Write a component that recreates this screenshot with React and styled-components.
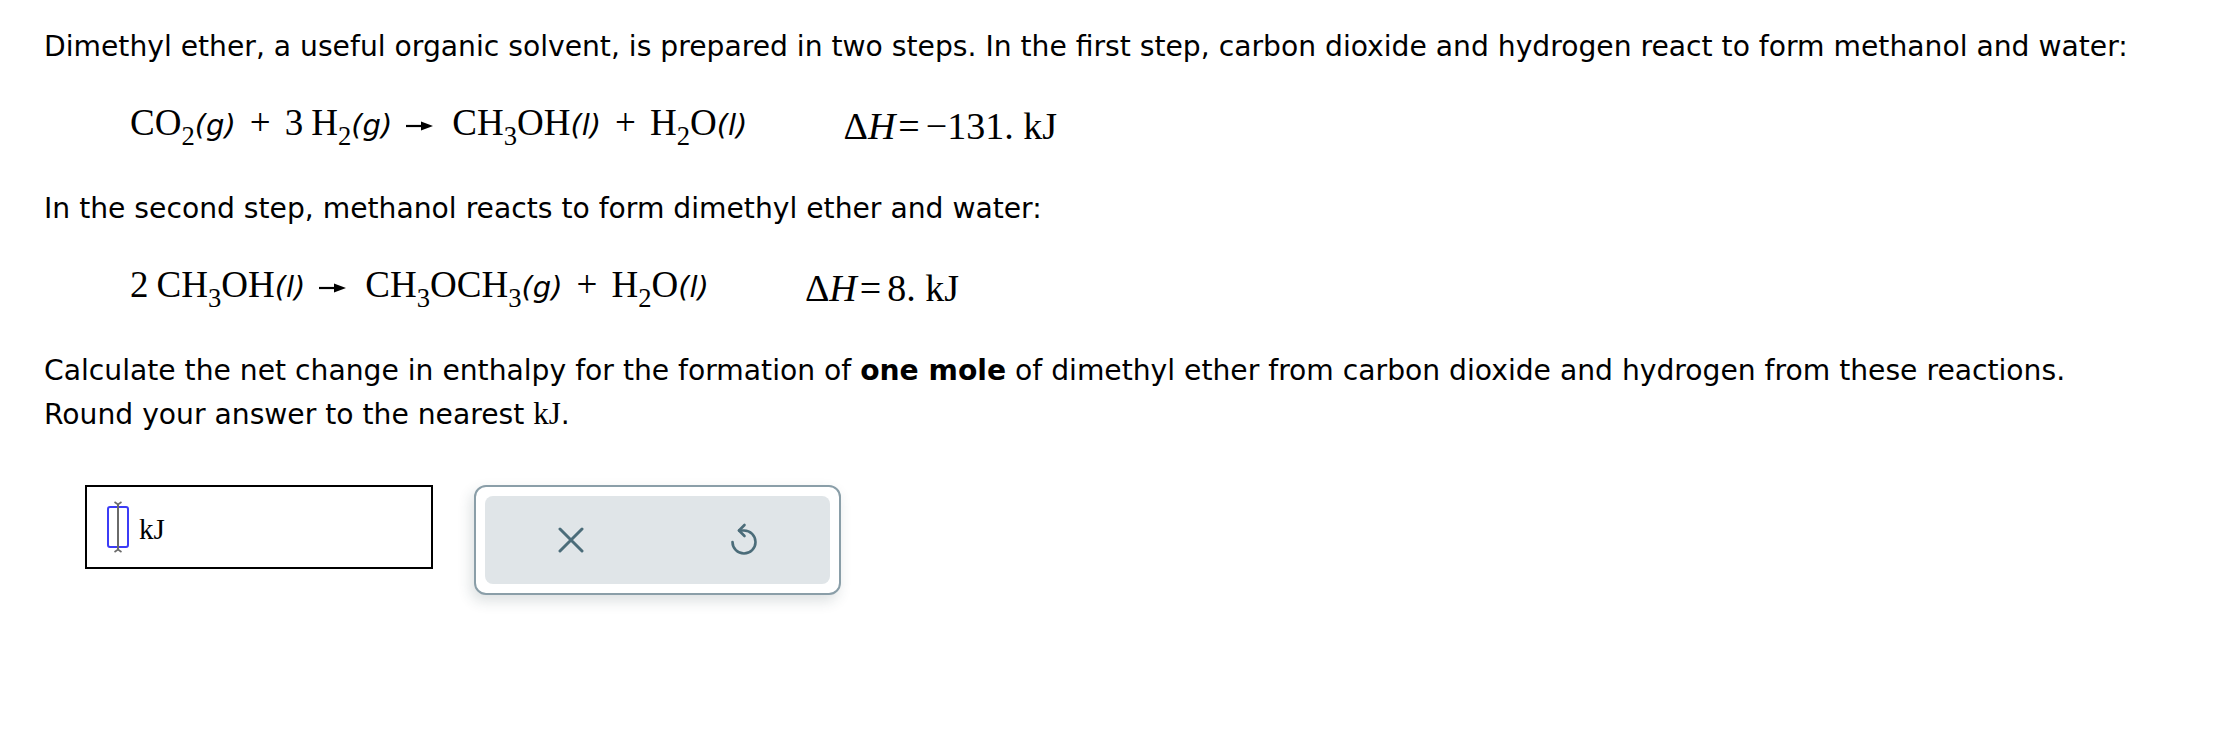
import styled, { createGlobalStyle } from "styled-components";

const GlobalStyle = createGlobalStyle`
  body {
    margin: 0;
    background: #ffffff;
  }
`;

const Page = styled.div`
  padding: 25px 0 60px 44px;
  font-family: "DejaVu Sans", Verdana, sans-serif;
  font-size: 28.2px;
  color: #000;
`;

const Para = styled.p`
  margin: 0;
  line-height: 43px;
  white-space: nowrap;
`;

const Unit = styled.span`
  font-family: "Liberation Serif", "Times New Roman", serif;
  font-size: 31px;
`;

const Equation = styled.div`
  padding: 34px 0 40px 86px;
  line-height: 42px;
  font-family: "Liberation Serif", "Times New Roman", serif;
  font-size: 37px;
  white-space: nowrap;
`;

const Sub = styled.span`
  font-size: 0.72em;
  line-height: 0;
  vertical-align: -0.36em;
`;

const State = styled.span`
  font-family: "DejaVu Sans", Verdana, sans-serif;
  font-style: italic;
  font-size: 29px;
`;

const Op = styled.span`
  margin: 0 14px;
`;

const Coef = styled.span`
  margin-right: 8px;
`;

const ArrowWrap = styled.span`
  display: inline-block;
  margin: 0 19px 0 13px;
  vertical-align: 3px;
  line-height: 0;
`;

const Enthalpy = styled.span`
  display: inline-block;
  margin-left: 96px;
  vertical-align: -4px;
  font-size: 38px;
`;

const Var = styled.i`
  font-style: italic;
`;

const Eq = styled.span`
  margin: 0 6px 0 3px;
`;

const Arrow = () => (
  <ArrowWrap>
    <svg width="28" height="12" viewBox="0 0 28 12">
      <line x1="1" y1="6" x2="19" y2="6" stroke="#000" strokeWidth="2.2" />
      <polygon points="16,1.5 28,6 16,10.5" fill="#000" />
    </svg>
  </ArrowWrap>
);

const AnswerRow = styled.div`
  display: flex;
  align-items: flex-start;
  gap: 41px;
  margin-top: 49px;
  padding-left: 41px;
`;

const AnswerBox = styled.div`
  box-sizing: border-box;
  width: 348px;
  height: 84px;
  border: 2px solid #000;
  display: flex;
  align-items: center;
  gap: 9px;
  padding-left: 19px;
`;

const BoxUnit = styled.span`
  font-family: "Liberation Serif", "Times New Roman", serif;
  font-size: 29px;
  line-height: 32px;
  margin-top: 4px;
`;

const Panel = styled.div`
  box-sizing: border-box;
  width: 367px;
  height: 110px;
  border: 2px solid #8a9ea8;
  border-radius: 12px;
  background: #fff;
  padding: 9px;
  box-shadow: -3px 6px 14px rgba(40, 60, 70, 0.16);
`;

const PanelInner = styled.div`
  height: 100%;
  border-radius: 8px;
  background: #e0e5e8;
  display: grid;
  grid-template-columns: 1fr 1fr;
  align-items: center;
  justify-items: center;
`;

const IconButton = styled.button`
  border: 0;
  background: transparent;
  padding: 0;
  display: flex;
  align-items: center;
  justify-content: center;
  cursor: pointer;
  color: #4b6c79;
`;

const Caret = () => (
  <svg width="24" height="52" viewBox="0 0 24 52">
    <rect x="2" y="6" width="20" height="40" rx="2" fill="none" stroke="#3c3cf6" strokeWidth="2" />
    <line x1="12" y1="3" x2="12" y2="49" stroke="#6a6a6a" strokeWidth="2" />
    <path d="M8.5 1 L12 3.5 L15.5 1 M8.5 51 L12 48.5 L15.5 51" fill="none" stroke="#6a6a6a" strokeWidth="1.6" />
  </svg>
);

const CloseIcon = () => (
  <svg width="26" height="26" viewBox="0 0 26 26">
    <path d="M2 2 L24 24 M24 2 L2 24" stroke="currentColor" strokeWidth="3" strokeLinecap="round" />
  </svg>
);

const UndoIcon = () => (
  <svg width="30" height="36" viewBox="0 0 30 36">
    <path
      d="M10 8.5 H15 A11.5 11.5 0 1 1 3.5 20"
      fill="none"
      stroke="currentColor"
      strokeWidth="2.6"
      strokeLinecap="round"
    />
    <path
      d="M15.5 3 L10 8.5 L15.5 14"
      fill="none"
      stroke="currentColor"
      strokeWidth="2.6"
      strokeLinecap="round"
      strokeLinejoin="round"
    />
  </svg>
);

export default function App() {
  return (
    <>
      <GlobalStyle />
      <Page>
        <Para>
          Dimethyl ether, a useful organic solvent, is prepared in two steps. In the first step, carbon
          dioxide and hydrogen react to form methanol and water:
        </Para>

        <Equation>
          CO<Sub>2</Sub>
          <State>(g)</State>
          <Op>+</Op>
          <Coef>3</Coef>H<Sub>2</Sub>
          <State>(g)</State>
          <Arrow />
          CH<Sub>3</Sub>OH<State>(l)</State>
          <Op>+</Op>
          H<Sub>2</Sub>O<State>(l)</State>
          <Enthalpy>
            Δ<Var>H</Var>
            <Eq>=</Eq>−131. kJ
          </Enthalpy>
        </Equation>

        <Para>In the second step, methanol reacts to form dimethyl ether and water:</Para>

        <Equation>
          <Coef>2</Coef>CH<Sub>3</Sub>OH<State>(l)</State>
          <Arrow />
          CH<Sub>3</Sub>OCH<Sub>3</Sub>
          <State>(g)</State>
          <Op>+</Op>
          H<Sub>2</Sub>O<State>(l)</State>
          <Enthalpy>
            Δ<Var>H</Var>
            <Eq>=</Eq>8. kJ
          </Enthalpy>
        </Equation>

        <Para>
          Calculate the net change in enthalpy for the formation of <b>one mole</b> of dimethyl ether from
          carbon dioxide and hydrogen from these reactions.
          <br />
          Round your answer to the nearest <Unit>kJ</Unit>.
        </Para>

        <AnswerRow>
          <AnswerBox>
            <Caret />
            <BoxUnit>kJ</BoxUnit>
          </AnswerBox>
          <Panel>
            <PanelInner>
              <IconButton aria-label="Clear">
                <CloseIcon />
              </IconButton>
              <IconButton aria-label="Undo">
                <UndoIcon />
              </IconButton>
            </PanelInner>
          </Panel>
        </AnswerRow>
      </Page>
    </>
  );
}
